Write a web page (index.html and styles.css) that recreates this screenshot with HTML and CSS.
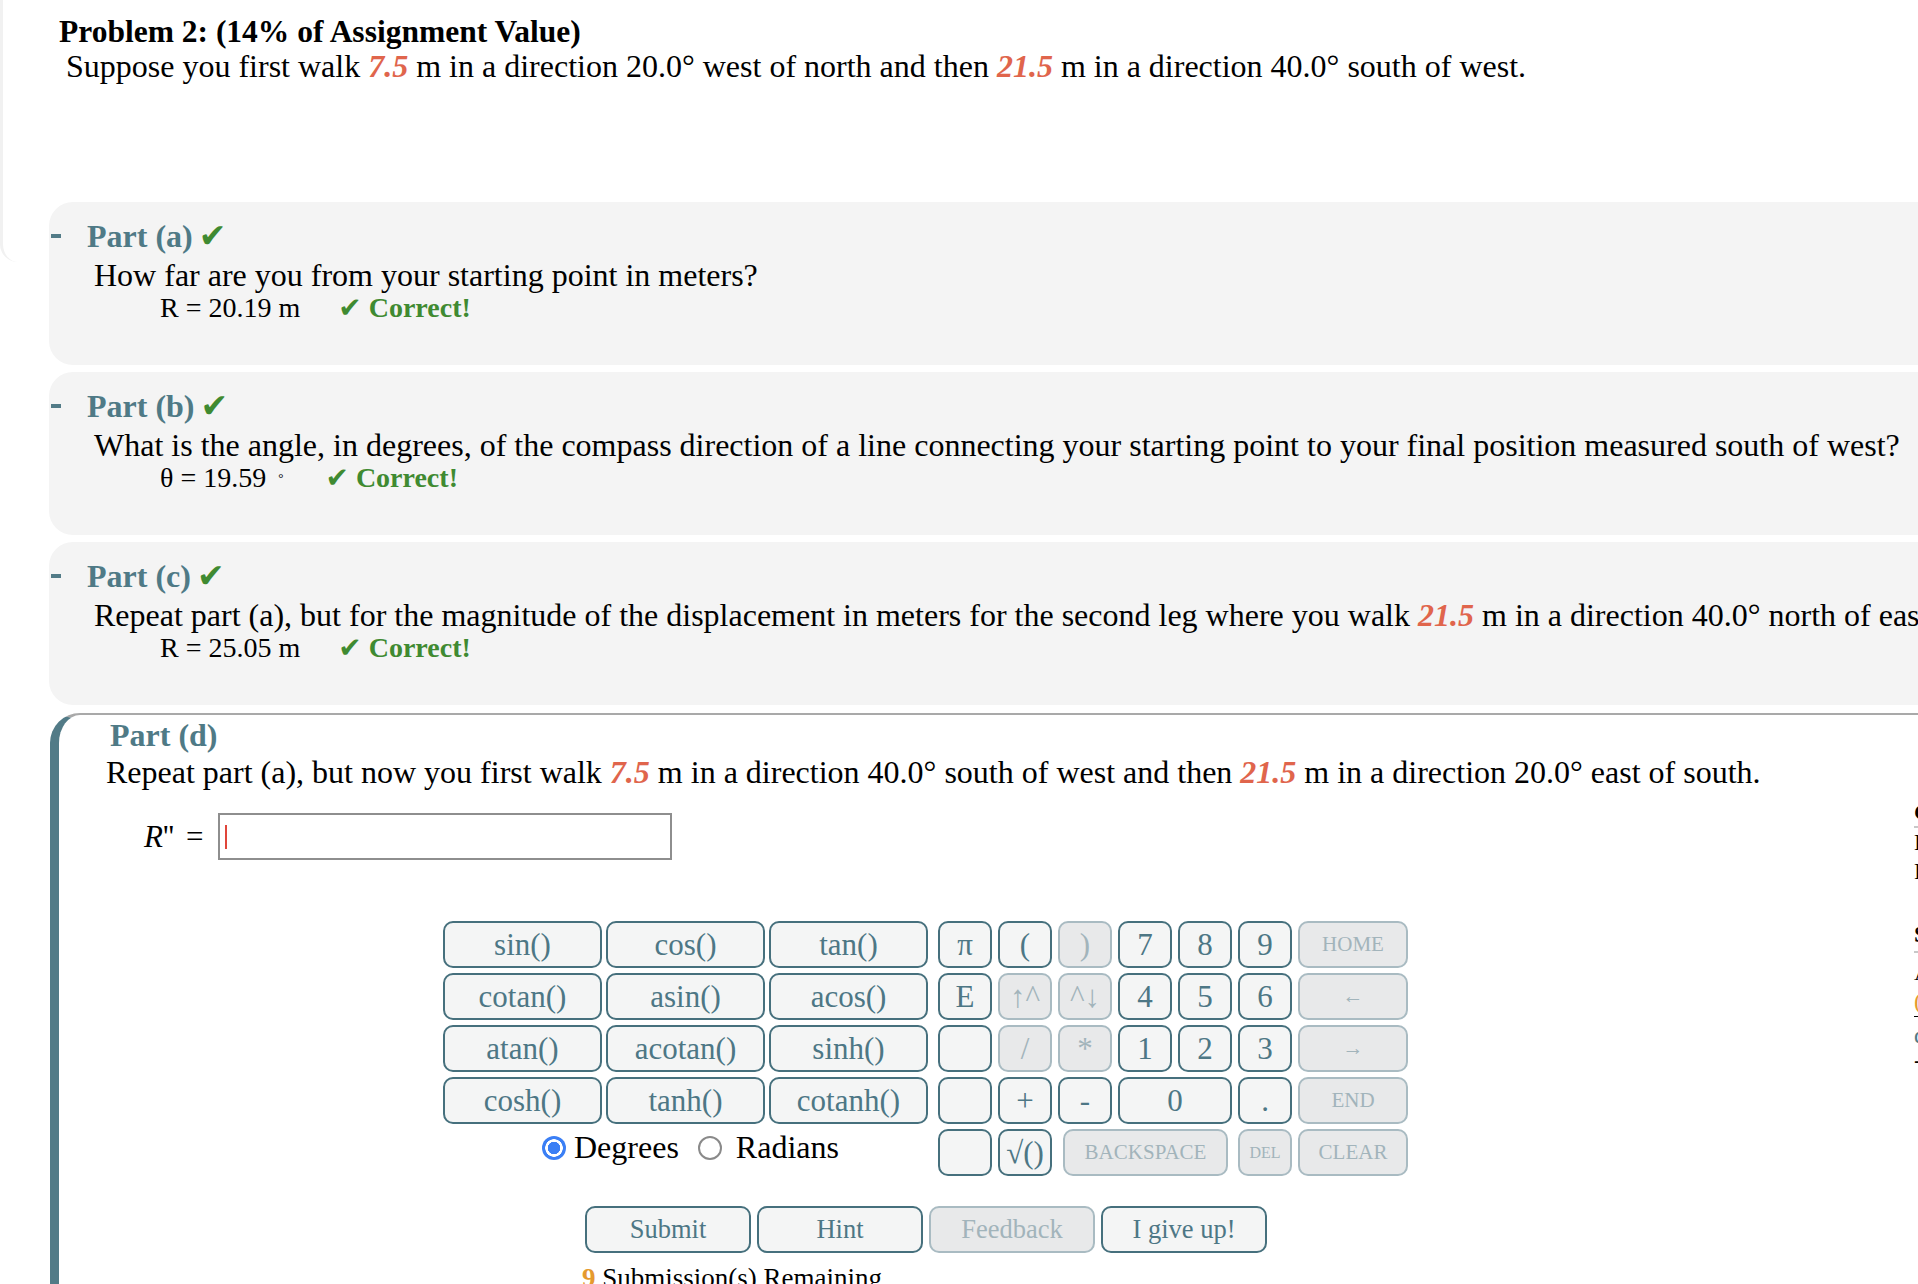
FILE: index.html
```html
<!DOCTYPE html>
<html lang="en">
<head>
<meta charset="utf-8">
<title>Problem 2</title>
<link rel="stylesheet" href="styles.css">
</head>
<body>
<div class="page">
  <div class="head">
    <h1 class="title">Problem 2: (14% of Assignment Value)</h1>
    <p class="stem">Suppose you first walk <b class="num">7.5</b> m in a direction 20.0° west of north and then <b class="num">21.5</b> m in a direction 40.0° south of west.</p>
  </div>

  <div class="part">
    <div class="part-head"><span class="dash"></span><span class="part-label">Part (a)</span><span class="check">✔</span></div>
    <div class="question">How far are you from your starting point in meters?</div>
    <div class="answer"><span class="ans-val">R = 20.19 m</span><span class="correct"><span class="ok">✔</span> Correct!</span></div>
  </div>

  <div class="part">
    <div class="part-head"><span class="dash"></span><span class="part-label">Part (b)</span><span class="check">✔</span></div>
    <div class="question">What is the angle, in degrees, of the compass direction of a line connecting your starting point to your final position measured south of west?</div>
    <div class="answer"><span class="ans-val">θ = 19.59<span class="deg">°</span></span><span class="correct wide"><span class="ok">✔</span> Correct!</span></div>
  </div>

  <div class="part">
    <div class="part-head"><span class="dash"></span><span class="part-label">Part (c)</span><span class="check">✔</span></div>
    <div class="question">Repeat part (a), but for the magnitude of the displacement in meters for the second leg where you walk <b class="num">21.5</b> m in a direction 40.0° north of east.</div>
    <div class="answer"><span class="ans-val">R = 25.05 m</span><span class="correct"><span class="ok">✔</span> Correct!</span></div>
  </div>

  <div class="part-d">
    <div class="main">
      <div class="d-label">Part (d)</div>
      <div class="question-d">Repeat part (a), but now you first walk <b class="num">7.5</b> m in a direction 40.0° south of west and then <b class="num">21.5</b> m in a direction 20.0° east of south.</div>
      <div class="input-row">
        <span class="var"><i>R</i>''<span class="eq">=</span></span>
        <div class="input"><span class="caret"></span></div>
      </div>

      <div class="calc">
        <div class="funcs">
          <div class="fgrid">
            <div class="btn">sin()</div>
            <div class="btn">cos()</div>
            <div class="btn">tan()</div>
            <div class="btn">cotan()</div>
            <div class="btn">asin()</div>
            <div class="btn">acos()</div>
            <div class="btn">atan()</div>
            <div class="btn">acotan()</div>
            <div class="btn">sinh()</div>
            <div class="btn">cosh()</div>
            <div class="btn">tanh()</div>
            <div class="btn">cotanh()</div>
          </div>
          <div class="units">
            <span class="radio on"></span><span class="unit-text">Degrees</span>
            <span class="radio off"></span><span class="unit-text">Radians</span>
          </div>
        </div>
        <div class="keys">
          <div class="btn">π</div>
          <div class="btn">(</div>
          <div class="btn off">)</div>
          <div class="btn">7</div>
          <div class="btn">8</div>
          <div class="btn">9</div>
          <div class="btn off small">HOME</div>

          <div class="btn">E</div>
          <div class="btn off">↑^</div>
          <div class="btn off">^↓</div>
          <div class="btn">4</div>
          <div class="btn">5</div>
          <div class="btn">6</div>
          <div class="btn off small">←</div>

          <div class="btn"></div>
          <div class="btn off">/</div>
          <div class="btn off">*</div>
          <div class="btn">1</div>
          <div class="btn">2</div>
          <div class="btn">3</div>
          <div class="btn off small">→</div>

          <div class="btn"></div>
          <div class="btn">+</div>
          <div class="btn">-</div>
          <div class="btn zero">0</div>
          <div class="btn">.</div>
          <div class="btn off small">END</div>

          <div class="btn"></div>
          <div class="btn">√()</div>
          <div class="btn off small backspace">BACKSPACE</div>
          <div class="btn off tiny">DEL</div>
          <div class="btn off small">CLEAR</div>
        </div>
      </div>

      <div class="actions">
        <div class="btn act">Submit</div>
        <div class="btn act">Hint</div>
        <div class="btn act off">Feedback</div>
        <div class="btn act">I give up!</div>
      </div>
      <div class="remaining"><b class="count">9</b> Submission(s) Remaining</div>
    </div>

    <aside class="summary">
      <div class="sum-h">Grade Summary</div>
      <div class="sum-row">Deductions 0%</div>
      <div class="sum-row">Potential 100%</div>
      <div class="sum-h sub">Submissions</div>
      <div class="sum-row att">Attempts remaining: 9</div>
      <div class="sum-row orange">(0% per attempt)</div>
      <div class="sum-row teal">detailed view</div>
      <div class="sum-row last">-</div>
    </aside>
  </div>
</div>
</body>
</html>
```

FILE: styles.css
```css
html, body {
  margin: 0;
  padding: 0;
  background: #fff;
  overflow: hidden;
}

body {
  font-family: "Liberation Serif", "Times New Roman", serif;
  color: #000;
}

.page {
  position: relative;
  width: 2700px;
}

.page::before {
  content: "";
  position: absolute;
  left: 0;
  top: 0;
  width: 18px;
  height: 262px;
  box-sizing: border-box;
  border-left: 3px solid #f1f1f1;
  border-bottom-left-radius: 18px;
}

.head {
  padding: 13px 0 0 59px;
  height: 189px;
}

.title {
  margin: 0;
  font-size: 31.5px;
  font-weight: bold;
  line-height: 38px;
}

.stem {
  margin: -4px 0 0 7px;
  font-size: 32px;
  line-height: 38px;
}

.num {
  color: #e0654c;
  font-style: italic;
  font-weight: bold;
}

/* finished parts */
.part {
  margin-left: 49px;
  width: 2600px;
  height: 163px;
  box-sizing: border-box;
  background: #f4f4f4;
  border-radius: 24px;
  margin-bottom: 7px;
  padding-top: 14px;
  white-space: nowrap;
}

.part-head {
  display: flex;
  align-items: center;
  height: 40px;
  font-size: 32px;
  line-height: 40px;
}

.dash {
  width: 10px;
  height: 4px;
  background: #527b87;
  margin-left: 2px;
  margin-right: 26px;
}

.part-label {
  color: #4f7a86;
  font-weight: bold;
}

.check {
  color: #3f8a31;
  margin-left: 6px;
  font-size: 33px;
  font-family: "DejaVu Sans", sans-serif;
}

.question {
  margin: 1px 0 0 45px;
  font-size: 32px;
  line-height: 36px;
}

.answer {
  margin-left: 111px;
  font-size: 28px;
  line-height: 30px;
  display: flex;
}

.deg {
  font-size: 13px;
  vertical-align: 5px;
  margin-left: 12px;
}

.correct {
  color: #3f8a31;
  font-weight: bold;
  margin-left: 38px;
}

.correct.wide {
  margin-left: 42px;
}

.ok {
  font-family: "DejaVu Sans", sans-serif;
  font-size: 28px;
}

/* active part */
.part-d {
  margin: 8px 0 0 50px;
  width: 2600px;
  border-top: 2px solid #a9a9a9;
  border-left: 9px solid #527b87;
  border-top-left-radius: 30px;
  display: flex;
  min-height: 600px;
}

.main {
  flex: none;
  width: 1855px;
  box-sizing: border-box;
  padding: 1px 0 0 47px;
}

.d-label {
  margin-left: 4px;
  font-size: 32px;
  line-height: 38px;
  font-weight: bold;
  color: #4f7a86;
}

.question-d {
  font-size: 32px;
  line-height: 36px;
  white-space: nowrap;
}

.input-row {
  margin-top: 23px;
  padding-left: 38px;
  display: flex;
  align-items: center;
  height: 47px;
}

.var {
  width: 74px;
  font-size: 31px;
  flex: none;
}

.eq {
  margin-left: 12px;
}

.input {
  width: 454px;
  height: 47px;
  box-sizing: border-box;
  border: 2px solid #8e8e8e;
  background: #fff;
  display: flex;
  align-items: center;
}

.caret {
  width: 2px;
  height: 24px;
  margin-left: 5px;
  background: #e0453a;
}

.calc {
  margin: 61px 0 0 337px;
  display: flex;
  gap: 10px;
}

.funcs {
  display: flex;
  flex-direction: column;
  gap: 5px;
}

.fgrid {
  display: grid;
  grid-template-columns: repeat(3, 159px);
  grid-auto-rows: 47px;
  column-gap: 4px;
  row-gap: 5px;
}

.btn {
  box-sizing: border-box;
  height: 47px;
  border: 2px solid #46707d;
  border-radius: 10px;
  background: #f4f5f5;
  color: #4d7785;
  font-size: 31px;
  display: flex;
  align-items: center;
  justify-content: center;
  white-space: nowrap;
}

.btn.off {
  border-color: #a9bbc2;
  background: #e8e9ea;
  color: #a2b4bb;
}

.btn.small {
  font-size: 21px;
}

.btn.tiny {
  font-size: 16px;
}

.units {
  height: 47px;
  margin-top: -5px;
  display: flex;
  align-items: center;
  padding-left: 99px;
  font-size: 32px;
}

.radio {
  width: 24px;
  height: 24px;
  border-radius: 50%;
  box-sizing: border-box;
  flex: none;
}

.radio.on {
  background: radial-gradient(circle, #3b7ff5 0 6px, #fff 6.5px 8.5px, #3b7ff5 9px);
}

.radio.off {
  border: 2px solid #8a8a8a;
  background: #fff;
  margin-left: 19px;
}

.unit-text {
  margin-left: 8px;
}

.units .radio.off + .unit-text {
  margin-left: 14px;
}

.keys {
  display: grid;
  grid-template-columns: repeat(6, 54px) 110px;
  grid-auto-rows: 47px;
  column-gap: 6px;
  row-gap: 5px;
}

.zero {
  grid-column: span 2;
}

.backspace {
  grid-column: span 3;
  margin: 0 4px 0 5px;
}

.actions {
  margin: 30px 0 0 479px;
  display: flex;
  gap: 6px;
}

.btn.act {
  width: 166px;
  font-size: 26.5px;
}

.remaining {
  margin: 9px 0 0 476px;
  font-size: 27px;
  line-height: 32px;
}

.count {
  color: #e59a2e;
}

/* side summary */
.summary {
  margin-top: 83px;
  width: 400px;
  flex: none;
  font-size: 24px;
  line-height: 29px;
  white-space: nowrap;
}

.sum-h {
  font-weight: bold;
  line-height: 28px;
  border-bottom: 2px solid #c8c8c8;
}

.sum-h.sub {
  margin-top: 34px;
  padding-bottom: 3px;
}

.sum-row.att {
  padding-top: 5px;
}

.sum-row.orange {
  color: #e59a2e;
  border-bottom: 1px solid #000;
}

.sum-row.teal {
  color: #4f7a86;
  padding-top: 4px;
}

.sum-row.last {
  line-height: 20px;
}
```
